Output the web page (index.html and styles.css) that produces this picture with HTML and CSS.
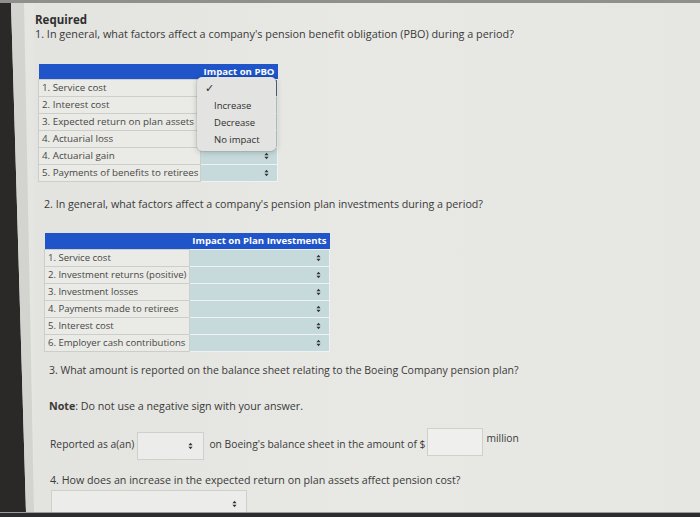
FILE: index.html
```html
<!DOCTYPE html>
<html>
<head>
<meta charset="utf-8">
<link rel="stylesheet" href="styles.css">
</head>
<body>
<div class="screen">
  <svg class="bezel" viewBox="0 0 34 517" preserveAspectRatio="none" aria-hidden="true">
    <polygon points="0,0 11,0 26,517 0,517" fill="#2a2927"/>
    <polygon points="11,0 24,0 34,517 26,517" fill="#d3d3cf"/>
  </svg>
  <main class="page">
    <h2 class="req-title">Required</h2>
    <p class="q q1">1. In general, what factors affect a company's pension benefit obligation (PBO) during a period?</p>

    <div class="t1-wrap">
      <table class="grid t1">
        <thead>
          <tr><th class="blank"></th><th>Impact on PBO</th></tr>
        </thead>
        <tbody>
          <tr><td class="lbl">1. Service cost</td><td class="sel open"></td></tr>
          <tr><td class="lbl">2. Interest cost</td><td class="sel"></td></tr>
          <tr><td class="lbl">3. Expected return on plan assets</td><td class="sel"></td></tr>
          <tr><td class="lbl">4. Actuarial loss</td><td class="sel"></td></tr>
          <tr><td class="lbl">4. Actuarial gain</td><td class="sel"><span class="arrows"><svg viewBox="0 0 6 9"><path d="M3 0.5L5.5 3.5H0.5Z M3 8.5L5.5 5.5H0.5Z"/></svg></span></td></tr>
          <tr><td class="lbl">5. Payments of benefits to retirees</td><td class="sel"><span class="arrows"><svg viewBox="0 0 6 9"><path d="M3 0.5L5.5 3.5H0.5Z M3 8.5L5.5 5.5H0.5Z"/></svg></span></td></tr>
        </tbody>
      </table>
      <div class="popup">
        <div class="opt checked"><span class="tick">✓</span></div>
        <div class="opt">Increase</div>
        <div class="opt">Decrease</div>
        <div class="opt">No impact</div>
      </div>
    </div>

    <p class="q q2">2. In general, what factors affect a company's pension plan investments during a period?</p>

    <table class="grid t2">
      <thead>
        <tr><th class="blank"></th><th>Impact on Plan Investments</th></tr>
      </thead>
      <tbody>
        <tr><td class="lbl">1. Service cost</td><td class="sel"><span class="arrows"><svg viewBox="0 0 6 9"><path d="M3 0.5L5.5 3.5H0.5Z M3 8.5L5.5 5.5H0.5Z"/></svg></span></td></tr>
        <tr><td class="lbl">2. Investment returns (positive)</td><td class="sel"><span class="arrows"><svg viewBox="0 0 6 9"><path d="M3 0.5L5.5 3.5H0.5Z M3 8.5L5.5 5.5H0.5Z"/></svg></span></td></tr>
        <tr><td class="lbl">3. Investment losses</td><td class="sel"><span class="arrows"><svg viewBox="0 0 6 9"><path d="M3 0.5L5.5 3.5H0.5Z M3 8.5L5.5 5.5H0.5Z"/></svg></span></td></tr>
        <tr><td class="lbl">4. Payments made to retirees</td><td class="sel"><span class="arrows"><svg viewBox="0 0 6 9"><path d="M3 0.5L5.5 3.5H0.5Z M3 8.5L5.5 5.5H0.5Z"/></svg></span></td></tr>
        <tr><td class="lbl">5. Interest cost</td><td class="sel"><span class="arrows"><svg viewBox="0 0 6 9"><path d="M3 0.5L5.5 3.5H0.5Z M3 8.5L5.5 5.5H0.5Z"/></svg></span></td></tr>
        <tr><td class="lbl">6. Employer cash contributions</td><td class="sel"><span class="arrows"><svg viewBox="0 0 6 9"><path d="M3 0.5L5.5 3.5H0.5Z M3 8.5L5.5 5.5H0.5Z"/></svg></span></td></tr>
      </tbody>
    </table>

    <p class="q q3">3. What amount is reported on the balance sheet relating to the Boeing Company pension plan?</p>
    <p class="q note"><b>Note</b>: Do not use a negative sign with your answer.</p>

    <div class="reported">
      <span class="txt">Reported as a(an)</span>
      <span class="box select-box"><span class="arrows"><svg viewBox="0 0 6 9"><path d="M3 0.5L5.5 3.5H0.5Z M3 8.5L5.5 5.5H0.5Z"/></svg></span></span>
      <span class="txt mid">on Boeing's balance sheet in the amount of $</span>
      <span class="box input-box"></span>
      <span class="txt unit">million</span>
    </div>

    <p class="q q4">4. How does an increase in the expected return on plan assets affect pension cost?</p>
    <div class="box wide-select"><span class="arrows"><svg viewBox="0 0 6 9"><path d="M3 0.5L5.5 3.5H0.5Z M3 8.5L5.5 5.5H0.5Z"/></svg></span></div>
  </main>
</div>
<div class="bottom-edge"></div>
</body>
</html>
```
FILE: styles.css
```css
html, body {
  margin: 0;
  padding: 0;
}
body {
  width: 700px;
  height: 517px;
  overflow: hidden;
  background: #e5e5e2;
  font-family: "Open Sans", "Noto Sans", sans-serif;
  color: #3a3a38;
  display: flex;
  flex-direction: column;
}
.screen {
  flex: 1;
  display: flex;
  border-top: 3px solid #8f8f8c;
  min-height: 0;
}
.bezel {
  width: 34px;
  height: 100%;
  flex: none;
  display: block;
}
.page {
  flex: 1;
  padding: 10px 0 0 1px;
  overflow: hidden;
  background: linear-gradient(90deg, #e3e3e0 0%, #e8e8e5 50%, #e6e6e3 100%);
}
.bottom-edge {
  height: 4px;
  background: #2c2c2e;
  border-top: 1px solid #9a9aa0;
  flex: none;
}
.req-title {
  margin: 0;
  font-size: 11.5px;
  font-weight: 700;
  line-height: 14px;
  color: #2f2f2d;
}
.q {
  margin: 0;
  font-size: 10.7px;
  line-height: 14px;
  color: #3a3a38;
}
.q1 { font-size: 10.85px; }
.q3 { font-size: 10.55px; }

.t1-wrap {
  margin: 23px 0 0 3px;
  position: relative;
  width: 240px;
}
.grid {
  border-collapse: collapse;
  font-size: 9.8px;
  line-height: 12px;
}
.grid th {
  background: #1f55c8;
  color: #ffffff;
  font-weight: 700;
  font-size: 9.6px;
  text-align: right;
  padding: 0 3px;
  height: 15px;
  white-space: nowrap;
}
.grid td {
  height: 16px;
  padding: 0 0 0 3px;
  white-space: nowrap;
}
.grid td.lbl {
  background: #eaeae7;
  border: 1px solid #cdcdc9;
  color: #474744;
}
.grid td.sel {
  background: #c6dadc;
  border: 1px solid #eef2f2;
  text-align: right;
  padding-right: 8px;
}
.t1 { width: 240px; }
.t1 td.lbl { width: 159px; }
.t1 td.sel.open {
  background: #f2f4f5;
  box-shadow: inset -2px 0 0 #5a6a80, inset 0 0 0 1px #8aa6c8;
}
.arrows {
  display: inline-block;
  width: 5px;
  height: 8px;
  vertical-align: middle;
}
.arrows svg {
  display: block;
  width: 5px;
  height: 8px;
  fill: #333;
}
.popup {
  position: absolute;
  left: 159px;
  top: 13px;
  width: 79px;
  height: 74px;
  background: #e3e3e1;
  border-radius: 5px;
  box-shadow: 0 1px 6px rgba(0,0,0,0.22), 0 0 0 0.5px rgba(0,0,0,0.12);
  padding-top: 3px;
  box-sizing: border-box;
  font-size: 9.5px;
  color: #2f2f2d;
}
.opt {
  height: 17px;
  line-height: 17px;
  padding-left: 17px;
}
.opt.checked { padding-left: 8px; }
.tick { font-size: 11px; font-family: "DejaVu Sans", sans-serif; }

.q2 { margin: 15px 0 0 9px; }

.t2 { width: 286px; margin: 22px 0 0 9px; }
.t2 th { height: 16px; }
.t2 td.lbl { width: 143px; font-size: 9.55px; }

.q3 { margin: 11px 0 0 14px; }
.note { margin: 22px 0 0 14px; }

.reported {
  display: flex;
  align-items: center;
  margin: 16px 0 0 15px;
  font-size: 10.3px;
  height: 30px;
}
.box {
  background: #ececea;
  border: 1px solid #cfcfcc;
  box-sizing: border-box;
}
.select-box {
  width: 67px;
  height: 28px;
  margin: 4px 0 0 3px;
  display: flex;
  align-items: center;
  justify-content: flex-end;
  padding-right: 10px;
}
.mid { margin-left: 5px; }
.input-box {
  width: 56px;
  height: 28px;
  margin: -4px 0 0 2px;
  background: #efefed;
}
.unit { margin: -12px 0 0 3px; }

.q4 { margin: 14px 0 0 15px; }
.wide-select {
  width: 196px;
  height: 27px;
  margin: 3px 0 0 16px;
  display: flex;
  align-items: center;
  justify-content: flex-end;
  padding-right: 9px;
}
```
